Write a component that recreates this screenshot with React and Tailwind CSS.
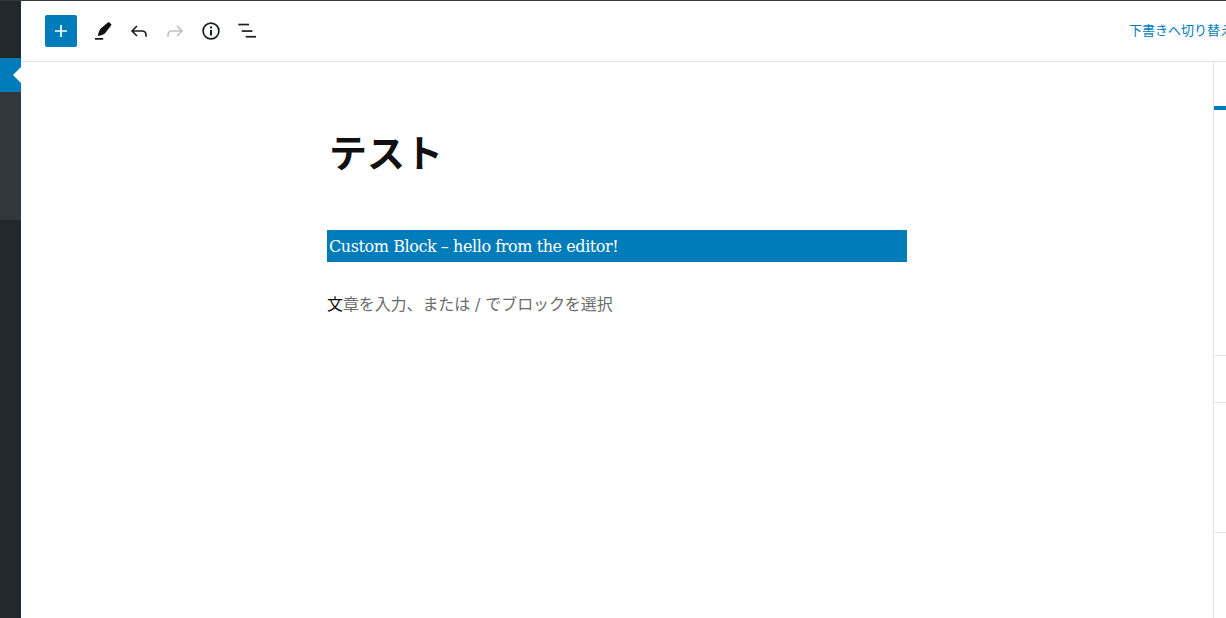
import React from 'react';

const serif = { fontFamily: '"DejaVu Serif", "Noto Sans CJK JP", serif' };

// Barre d'outils de l'éditeur
const Toolbar = () => (
  <div className="h-[61px] shrink-0 flex items-center bg-white border-b border-[#e2e4e7] overflow-hidden">
    <div className="flex items-center ml-6">
      <button className="w-8 h-8 flex items-center justify-center rounded-[2px] bg-[#007cba]">
        <svg width="14" height="14" viewBox="0 0 14 14" fill="none" stroke="#fff" strokeWidth="1.7">
          <path d="M7 1v12M1 7h12" />
        </svg>
      </button>
      <svg className="ml-4" width="20" height="20" viewBox="0 0 20 20" fill="#111">
        <path d="M14.8 1.6l1.1-.6 2.6 2.4-.6 1.3-5.6 7.4c-1 1.2-4 2.4-7.5 2.9.5-3.4 1.8-6.2 3-7.4z" />
        <rect x="2" y="17" width="8.2" height="1.7" />
      </svg>
      <svg className="ml-4" width="20" height="20" viewBox="0 0 20 20" fill="none" stroke="#191e23" strokeWidth="1.6">
        <path d="M8 5L3 10l5 5M3 10h10c2.6 0 4 1.5 4 3.8v1.9" />
      </svg>
      <svg className="ml-4" width="20" height="20" viewBox="0 0 20 20" fill="none" stroke="#bcbfc2" strokeWidth="1.6">
        <path d="M12 5l5 5-5 5M17 10H7c-2.6 0-4 1.5-4 3.8v1.9" />
      </svg>
      <svg className="ml-4" width="20" height="20" viewBox="0 0 20 20" fill="none" stroke="#191e23">
        <circle cx="10" cy="10" r="7.9" strokeWidth="1.7" />
        <path d="M10 9v5.6" strokeWidth="2" />
        <path d="M10 5.4v2" strokeWidth="2" />
      </svg>
      <svg className="ml-4" width="20" height="20" viewBox="0 0 20 20" fill="#191e23">
        <rect x="1.3" y="2.7" width="10.7" height="1.7" />
        <rect x="4.7" y="9.2" width="10.7" height="1.7" />
        <rect x="8.7" y="14.9" width="10.3" height="1.7" />
      </svg>
    </div>
    <span className="ml-auto mb-[2px] text-[13px] text-[#007cba] whitespace-nowrap w-[97px] overflow-hidden" style={{ fontFamily: '"Noto Sans CJK JP", sans-serif' }}>
      下書きへ切り替え
    </span>
  </div>
);

const App = () => {
  return (
    <div className="h-[618px] w-[1226px] flex flex-col overflow-hidden bg-white">
      <div className="h-px shrink-0 bg-[#32373c]"></div>
      <div className="flex-1 flex min-h-0">
        {/* Menu latéral */}
        <div className="w-[21px] shrink-0 flex flex-col bg-[#23282d]">
          <div className="h-[57px] shrink-0"></div>
          <div className="h-[34px] shrink-0 flex items-center justify-end bg-[#007cba]">
            <div className="w-0 h-0 border-y-[8px] border-y-transparent border-r-[8px] border-r-white"></div>
          </div>
          <div className="h-[128px] shrink-0 bg-[#32373c]"></div>
        </div>

        <div className="flex-1 min-w-0 flex flex-col">
          <Toolbar />

          <div className="flex-1 flex min-h-0">
            {/* Zone d'édition */}
            <div className="flex-1 min-w-0 pl-[306px]" style={serif}>
              <h1 className="mt-[65px] ml-[2px] h-[54px] text-[38px] leading-[54px] font-bold text-[#111]">テスト</h1>
              <div className="mt-[49px] w-[580px] h-8 pl-[2px] pt-[2px] flex items-center bg-[#007cba] text-white text-[16px] tracking-[-0.42px] whitespace-nowrap">
                Custom Block – hello from the editor!
              </div>
              <p className="mt-[31px] text-[16px] leading-[24px] text-[#6c6c6c] whitespace-nowrap tracking-[-0.1px]">
                <span className="text-[#111]">文</span>章を入力、または / でブロックを選択
              </p>
            </div>

            {/* Panneau de réglages */}
            <div className="w-[13px] shrink-0 flex flex-col border-l border-[#e2e4e7]">
              <div className="h-[48px] shrink-0 border-b-[4px] border-[#007cba]"></div>
              <div className="h-[246px] shrink-0 border-b border-[#e2e4e7]"></div>
              <div className="h-[47px] shrink-0 border-b border-[#e2e4e7]"></div>
              <div className="h-[130px] shrink-0 border-b border-[#e2e4e7]"></div>
            </div>
          </div>
        </div>
      </div>
    </div>
  );
};

export default App;
